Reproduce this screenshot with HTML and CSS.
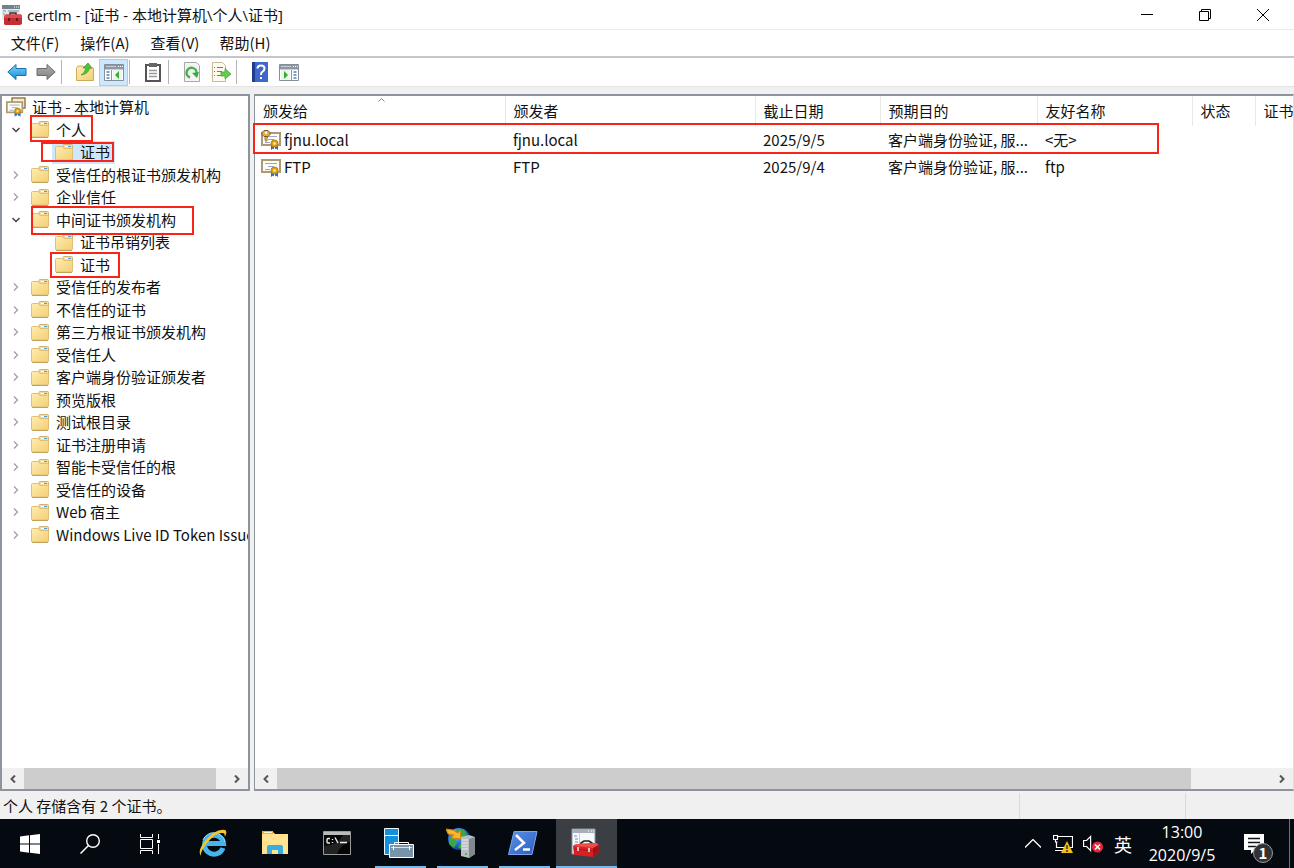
FILE: index.html
```html
<!DOCTYPE html>
<html lang="zh-CN">
<head>
<meta charset="utf-8">
<meta name="viewport" content="width=device-width, initial-scale=1">
<title>certlm - [证书 - 本地计算机\个人\证书]</title>
<link rel="stylesheet" href="styles.css">
</head>
<body>
<svg class="defs" aria-hidden="true">
  <defs>
    <linearGradient id="gold" x1="0" y1="0" x2="1" y2="1"><stop offset="0" stop-color="#ffedb0"/><stop offset="1" stop-color="#f2cf74"/></linearGradient>
    <linearGradient id="blue" x1="0" y1="0" x2="0" y2="1"><stop offset="0" stop-color="#7fd4fa"/><stop offset="1" stop-color="#148ad6"/></linearGradient>
    <linearGradient id="grey" x1="0" y1="0" x2="0" y2="1"><stop offset="0" stop-color="#b0b0b0"/><stop offset="1" stop-color="#808080"/></linearGradient>
    <linearGradient id="psblue" x1="0" y1="0" x2="1" y2="1"><stop offset="0" stop-color="#5d8fe6"/><stop offset="1" stop-color="#2a5fc0"/></linearGradient>
    <radialGradient id="globe" cx=".4" cy=".3" r=".8"><stop offset="0" stop-color="#8fc8ff"/><stop offset=".5" stop-color="#2a6fd8"/><stop offset="1" stop-color="#0b2c86"/></radialGradient>
    <symbol id="folder" viewBox="0 0 18 17">
      <path d="M8 4V1.500q0-1 1-1h7.500q1 0 1 1V6z" fill="#f3dda0" stroke="#d2b26c"/>
      <path d="M10 2.500h6" stroke="#fff"/><path d="M13 2.500h3" stroke="#4c9ae0"/>
      <path d="M.5 3.500q0-1 1-1h6l1.500 2H16.500q1 0 1 1V15q0 1-1 1h-15q-1 0-1-1z" fill="url(#gold)" stroke="#dfbf78"/>
      <path d="M1 16.500h16" stroke="#c5a25a"/>
    </symbol>
    <symbol id="cert" viewBox="0 0 21 19">
      <rect x="1" y="2" width="18" height="12" fill="#fdfcf7" stroke="#ab9a74" stroke-width="2"/>
      <path d="M4 5.500h12M7 8.500h6M4 11.500h5" stroke="#9ba3d8"/>
      <path d="M10 14v5l2-1.500 1 1V14zM14 14v4.500l1-1 2 1.500v-5z" fill="#2468d8"/>
      <circle cx="13.500" cy="12.500" r="3.500" fill="#dca314" stroke="#b98208"/><circle cx="13.500" cy="12.500" r="1.300" fill="#fff0a0"/>
    </symbol>
    <symbol id="key" viewBox="0 0 10 12">
      <path d="M4 6v4l1 1.500L6.500 10 5.500 9l1-1V5z" fill="#e2b54b" stroke="#94691c" stroke-width=".8"/>
      <path d="M1 2.500 3 .5h4l2 2v2l-2 2H3l-2-2z" fill="#dfb04b" stroke="#82591b"/><circle cx="5" cy="2.700" r="1.200" fill="#fff"/>
    </symbol>
    <symbol id="toolbox" viewBox="0 0 28 30">
      <path d="M1 1h23v25H1z" fill="#f7f8fa" stroke="#8c9299"/>
      <path d="M1 1h23v4H1z" fill="#a8afb8"/><path d="M17 3h1M20 3h1M22 3h1" stroke="#fff"/>
      <path d="M3 8h3M4 11h3M4 14h3M3 17h2" stroke="#6b8fbd"/><path d="M8.500 5v14" stroke="#ccc"/>
      <path d="M10 17v-2l3-2h5l3 2v2" fill="none" stroke="#222" stroke-width="1.600"/>
      <path d="m2 18 4-2 20-1 1.500 2v8L22 29 3 27z" fill="#d72125"/><path d="m2 18 4-2 20-1 1.500 2-5 3z" fill="#f04c48"/>
      <path d="m22 20 5.500-3v8L22 29z" fill="#a51217"/><path d="M3 21l19 2 5-2" fill="none" stroke="#861015" stroke-width=".6"/>
      <path d="M7 19v4M18 20v4" stroke="#eee" stroke-width="1.500"/>
    </symbol>
    <symbol id="window" viewBox="0 0 20 17">
      <path d="M.5.500h19v16H.5z" fill="#fff" stroke="#858e99"/><path d="M1 1h18v4H1z" fill="#8d98a6"/>
      <path d="M2 2.500h10" stroke="#c6cdd6"/><path d="M14 2.500h1M16 2.500h1M18 2.500h1" stroke="#fff"/><path d="M1 5.500h18" stroke="#c8ced6"/>
    </symbol>
    <symbol id="left" viewBox="0 0 8 8"><path d="M6 .5 2.500 4 6 7.500" fill="none" stroke="currentColor" stroke-width="2"/></symbol>
    <symbol id="right" viewBox="0 0 8 8"><path d="M2 .5 5.500 4 2 7.500" fill="none" stroke="currentColor" stroke-width="2"/></symbol>
    <symbol id="closed" viewBox="0 0 8 8"><path d="m2 .5 3.500 3.500L2 7.500" fill="none" stroke="#a0a0a0" stroke-width="1.300"/></symbol>
    <symbol id="open" viewBox="0 0 8 8"><path d="m.5 2 3.500 3.500L7.500 2" fill="none" stroke="#404040" stroke-width="1.500"/></symbol>
  </defs>
</svg>
<div class="desktop">
  <header class="titlebar">
    <svg class="app-icon" viewBox="0 0 20 20"><path d="M0 0h18v15H0z" fill="#e3e8ec"/><path d="M0 0h18v4H0z" fill="#75818c"/><path d="M12 2h1M14 2h1M16 2h1" stroke="#fff"/><path d="M1 6h3M1 9h2M6 6h11" stroke="#7890a8"/><path d="M8 10V8h6v2" fill="none" stroke="#303030" stroke-width="1.500"/><path d="m2 11 2-1.500h15l1 1.500v8l-2 1H3l-1-1z" fill="#c32f34"/><path d="m2 11 2-1.500h15l1 1.500v2H2z" fill="#dc4a4c"/><path d="M7 13v3M15 13v3" stroke="#6e1518" stroke-width="2"/></svg>
    <h1 class="title">certlm - [证书 - 本地计算机\个人\证书]</h1>
    <div class="window-controls">
      <button aria-label="最小化"><svg viewBox="0 0 12 12"><path d="M0 5.500h12"/></svg></button>
      <button aria-label="还原"><svg viewBox="0 0 12 12"><path d="M.5 2.500h9v9h-9zM2.500 2V.5h9v9H10"/></svg></button>
      <button aria-label="关闭"><svg viewBox="0 0 12 12"><path d="m0 0 12 12M12 0 0 12"/></svg></button>
    </div>
  </header>
  <nav class="menubar">
    <button>文件(F)</button><button>操作(A)</button><button>查看(V)</button><button>帮助(H)</button>
  </nav>
  <div class="toolbar" role="toolbar" aria-label="工具栏">
    <button aria-label="后退"><svg viewBox="0 0 20 20"><path d="M.8 10 9 2.500v4h10v7H9v4z" fill="url(#blue)" stroke="#1971ae"/></svg></button>
    <button aria-label="前进"><svg viewBox="0 0 20 20"><path d="M19.200 10 11 2.500v4H1v7h10v4z" fill="url(#grey)" stroke="#6c6c6c"/></svg></button>
    <i class="sep"></i>
    <button aria-label="上一级"><svg viewBox="0 0 20 20"><path d="M1.500 5.500 3 4h5l2 2h8.500v12.500h-17z" fill="url(#gold)" stroke="#d0aa5a"/><path d="M6 13q4-2 5-7H8l5-5 4 5h-2.500q-1 6-8.500 7" fill="#56c03e" stroke="#349a25" stroke-width=".7"/></svg></button>
    <button class="pressed" aria-label="显示控制台树"><svg viewBox="0 0 20 20"><use href="#window" y="2" width="20" height="17"/><path d="M2.500 10h3M2.500 13h3M2.500 16h3" stroke="#4f83bf" stroke-width="1.500"/><path d="M7.500 8v10" stroke="#8d98a6"/><path d="M9 8h9v10H9z" fill="#eef6ec"/><path d="M15 9v8l-4-4z" fill="#36ae35"/></svg></button>
    <i class="sep"></i>
    <button aria-label="粘贴"><svg viewBox="0 0 20 20"><path d="M3 3h14v16H3z" fill="#fff" stroke="#555" stroke-width="2"/><path d="M6 1h8v4H6z" fill="#666"/><path d="M6 8.500h8M6 11.500h8M6 14.500h8" stroke="#999" stroke-width="1.500"/></svg></button>
    <i class="sep"></i>
    <button aria-label="刷新"><svg viewBox="0 0 20 20"><path d="M2.500.500h12l3 3v16h-15z" fill="#f4f4f4" stroke="#a8a8a8"/><path d="M8 15.500a5 5 0 1 1 6.500-4" fill="none" stroke="#45b54b" stroke-width="2.500"/><path d="m10 11 7-1-2 6z" fill="#34ad3d"/></svg></button>
    <button aria-label="导出列表"><svg viewBox="0 0 20 20"><path d="M1.500.500h10l3 3v16h-13z" fill="#fffced" stroke="#c5bb9b"/><path d="M3 5.500h1M3 9.500h1M3 13.500h1M6 5.500h6M6 9.500h5M6 13.500h5" stroke="#777"/><path d="M10 10h4V6.500l6 5.500-6 5v-3h-4z" fill="#63ce4b" stroke="#39a22e" stroke-width=".7"/></svg></button>
    <i class="sep"></i>
    <button aria-label="帮助"><svg viewBox="0 0 20 20"><path d="M2 0h16v20H2z" fill="#3f66cb"/><path d="M2 0h3v20H2z" fill="#203c8f"/><path d="M7.500 6.500q0-3 3.500-3t3.500 3q0 2-2 3.200Q11 10.500 11 13" fill="none" stroke="#fff" stroke-width="2"/><path d="M10 15h2v2h-2z" fill="#fff"/></svg></button>
    <button aria-label="显示操作窗格"><svg viewBox="0 0 20 20"><use href="#window" y="2" width="20" height="17"/><path d="M2 8h9v10H2z" fill="#eef6ec"/><path d="M5 9v8l4-4z" fill="#36ae35"/><path d="M12.500 8v10" stroke="#8d98a6"/><path d="M14.500 10h3M14.500 13h3M14.500 16h3" stroke="#4f83bf" stroke-width="1.500"/></svg></button>
  </div>
  <main class="panes">
    <section class="pane tree-pane" aria-label="控制台树">
      <ul class="tree" role="tree">
        <li class="root" role="treeitem"><svg class="root-icon" viewBox="0 0 20 20"><path d="M6 1h13v10H6z" fill="#f5edcf" stroke="#9b7b43" stroke-width="1.500"/><use href="#cert" y="3" width="18" height="17"/></svg><span>证书 - 本地计算机</span></li>
        <li role="treeitem"><button aria-label="折叠"><svg><use href="#open"/></svg></button><svg class="folder"><use href="#folder"/></svg><span>个人</span><i class="mark mark-personal"></i></li>
        <li class="child selected" role="treeitem" aria-selected="true"><svg class="folder"><use href="#folder"/></svg><span>证书</span><i class="mark mark-selected"></i></li>
        <li role="treeitem"><button aria-label="展开"><svg><use href="#closed"/></svg></button><svg class="folder"><use href="#folder"/></svg><span>受信任的根证书颁发机构</span></li>
        <li role="treeitem"><button aria-label="展开"><svg><use href="#closed"/></svg></button><svg class="folder"><use href="#folder"/></svg><span>企业信任</span></li>
        <li role="treeitem"><button aria-label="折叠"><svg><use href="#open"/></svg></button><svg class="folder"><use href="#folder"/></svg><span>中间证书颁发机构</span><i class="mark mark-authority"></i></li>
        <li class="child" role="treeitem"><svg class="folder"><use href="#folder"/></svg><span>证书吊销列表</span></li>
        <li class="child" role="treeitem"><svg class="folder"><use href="#folder"/></svg><span>证书</span><i class="mark mark-child"></i></li>
        <li role="treeitem"><button aria-label="展开"><svg><use href="#closed"/></svg></button><svg class="folder"><use href="#folder"/></svg><span>受信任的发布者</span></li>
        <li role="treeitem"><button aria-label="展开"><svg><use href="#closed"/></svg></button><svg class="folder"><use href="#folder"/></svg><span>不信任的证书</span></li>
        <li role="treeitem"><button aria-label="展开"><svg><use href="#closed"/></svg></button><svg class="folder"><use href="#folder"/></svg><span>第三方根证书颁发机构</span></li>
        <li role="treeitem"><button aria-label="展开"><svg><use href="#closed"/></svg></button><svg class="folder"><use href="#folder"/></svg><span>受信任人</span></li>
        <li role="treeitem"><button aria-label="展开"><svg><use href="#closed"/></svg></button><svg class="folder"><use href="#folder"/></svg><span>客户端身份验证颁发者</span></li>
        <li role="treeitem"><button aria-label="展开"><svg><use href="#closed"/></svg></button><svg class="folder"><use href="#folder"/></svg><span>预览版根</span></li>
        <li role="treeitem"><button aria-label="展开"><svg><use href="#closed"/></svg></button><svg class="folder"><use href="#folder"/></svg><span>测试根目录</span></li>
        <li role="treeitem"><button aria-label="展开"><svg><use href="#closed"/></svg></button><svg class="folder"><use href="#folder"/></svg><span>证书注册申请</span></li>
        <li role="treeitem"><button aria-label="展开"><svg><use href="#closed"/></svg></button><svg class="folder"><use href="#folder"/></svg><span>智能卡受信任的根</span></li>
        <li role="treeitem"><button aria-label="展开"><svg><use href="#closed"/></svg></button><svg class="folder"><use href="#folder"/></svg><span>受信任的设备</span></li>
        <li role="treeitem"><button aria-label="展开"><svg><use href="#closed"/></svg></button><svg class="folder"><use href="#folder"/></svg><span>Web 宿主</span></li>
        <li role="treeitem"><button aria-label="展开"><svg><use href="#closed"/></svg></button><svg class="folder"><use href="#folder"/></svg><span>Windows Live ID Token Issue</span></li>
      </ul>
      <div class="scrollbar"><button aria-label="向左滚动"><svg><use href="#left"/></svg></button><div class="track"><div class="thumb thumb-tree"></div></div><button aria-label="向右滚动"><svg><use href="#right"/></svg></button></div>
    </section>
    <section class="pane list-pane" aria-label="证书列表">
      <div class="list">
        <svg class="sort" viewBox="0 0 7 4"><path d="M.5 3.500l3-3 3 3" fill="none" stroke="#888"/></svg>
        <table>
          <colgroup><col class="c-name"><col class="c-name"><col class="c-date"><col class="c-use"><col class="c-friendly"><col class="c-state"><col class="c-last"></colgroup>
          <thead><tr><th>颁发给</th><th>颁发者</th><th>截止日期</th><th>预期目的</th><th>友好名称</th><th>状态</th><th>证书</th></tr></thead>
          <tbody>
            <tr><td class="subject"><div><svg class="cert" viewBox="0 0 21 20"><use href="#cert" y="1" width="21" height="19"/><use href="#key" width="10" height="12"/></svg>fjnu.local</div></td><td>fjnu.local</td><td>2025/9/5</td><td>客户端身份验证, 服...</td><td>&lt;无&gt;</td><td></td><td></td></tr>
            <tr><td class="subject"><div><svg class="cert" viewBox="0 0 21 20"><use href="#cert" y="1" width="21" height="19"/></svg>FTP</div></td><td>FTP</td><td>2025/9/4</td><td>客户端身份验证, 服...</td><td>ftp</td><td></td><td></td></tr>
          </tbody>
        </table>
      </div>
      <i class="mark mark-row"></i>
      <div class="scrollbar"><button aria-label="向左滚动"><svg><use href="#left"/></svg></button><div class="track"><div class="thumb thumb-list"></div></div><button aria-label="向右滚动"><svg><use href="#right"/></svg></button></div>
    </section>
  </main>
  <footer class="status"><span>个人 存储含有 2 个证书。</span><i class="status-a"></i><i class="status-b"></i></footer>
  <div class="taskbar">
    <div class="system">
      <button aria-label="开始"><svg width="20" height="20" viewBox="0 0 20 20"><path d="m0 2.500 9-1.200V9.500H0zm10-1.300L20 0v9.500H10zM0 10.500h9v8.200L0 17.500zm10 0h10V20l-10-1.200z" fill="#fff"/></svg></button>
      <button aria-label="搜索"><svg width="20" height="20" viewBox="0 0 20 20"><circle cx="13" cy="7" r="6.300" fill="none" stroke="#fff" stroke-width="1.400"/><path d="m8.500 11.500-8 8" stroke="#fff" stroke-width="1.500"/></svg></button>
      <button aria-label="任务视图"><svg width="20" height="20" viewBox="0 0 20 20"><path d="M.5 0v3.500h12V0M.5 20v-3.500h12V20M.5 5.500h12v9H.5zM18.500 0v5M18.500 10v10" fill="none" stroke="#fff"/><path d="M17 6h3v3h-3z" fill="#fff"/></svg></button>
    </div>
    <div class="apps">
      <button aria-label="Internet Explorer"><svg width="30" height="30" viewBox="0 0 30 30"><path d="M25 20A9.500 9.500 0 1 1 25.500 15.500H9" fill="none" stroke="#45b6ec" stroke-width="5"/><path d="M27 14A11.500 11.500 0 0 0 5 12" fill="none" stroke="#9be2ff"/><path d="M3 28Q-1 23 7 13 18 0 27 2q3 2-.5 7 1-4-2-4Q18 4 9 15q-7 9-6 13z" fill="#f4c52c"/></svg></button>
      <button aria-label="文件资源管理器"><svg width="28" height="24" viewBox="0 0 28 24"><path d="M1 1h11l2 2h13v20H1z" fill="#ffe390"/><path d="M1 0h11v3H1z" fill="#efb633"/><path d="M3 1.500h8" stroke="#fff4c4"/><path d="M6 23v-7q0-2 2-2h12q2 0 2 2v7h-5v-4h-6v4z" fill="#35afe3"/></svg></button>
      <button aria-label="命令提示符"><svg width="28" height="24" viewBox="0 0 28 24"><path d="M.5.500h27v23H.5z" fill="#050505" stroke="#9a9a9a"/><path d="M1 1h26v3H1z" fill="#bbb"/><path d="M1 23V15Q15 14 20 4h7v7Q18 13 14 23z" fill="#222"/><path d="M7 7.500H5q-1 0-1 1.500v2q0 1 1 1h2M9.500 8v1M9.500 11v1M12 6.500l3 5.500M17 11.500h7" fill="none" stroke="#eee" stroke-width="1.400"/></svg></button>
      <button class="running" aria-label="服务器管理器"><svg width="30" height="30" viewBox="0 0 30 30"><path d="M.5.500h14v26H.5z" fill="#168fdd" stroke="#eaf8ff"/><path d="M0 7.500h15" stroke="#fff"/><path d="M10.500 17v-2.500h14V17" fill="none" stroke="#fff"/><path d="M5.500 16.500h24v13h-24z" fill="#7894a8" stroke="#fff"/><path d="M7 19.500h21" stroke="#d7e2e8"/><path d="M9.500 18v4M25.500 18v4" stroke="#fff"/></svg></button>
      <button class="running" aria-label="IIS 管理器"><svg width="30" height="30" viewBox="0 0 30 30"><circle cx="13" cy="11" r="11" fill="url(#globe)"/><path d="m11 1 7 1 3 5-5 5-5-2-2-4zm-8 8 5 2 3 4-3 5-5-4zm12 6 4 2-3 5-4-3z" fill="#35a942"/><path d="M0 1 7 2l5 3 2-3 1 9-10-1 3-3-6-1z" fill="#f8b62e" stroke="#cd8210"/><path d="m15 9 8-2 6 2v17l-6 4-8-2z" fill="#b8bdc1"/><path d="m23 11 6-2v17l-6 4z" fill="#81888d"/><path d="M16 12h6M16 15h6M16 18h6M16 21h6" stroke="#eee"/><path d="M19 25h2v2h-2z" fill="#43c33b"/></svg></button>
      <button class="running" aria-label="PowerShell"><svg width="30" height="24" viewBox="0 0 30 24"><path d="M6 .5h23L24 23.500H.5z" fill="url(#psblue)" stroke="#7ba5ee"/><path d="m8 4 8 8-9 7M15 18.500h7" fill="none" stroke="#fff" stroke-width="2.500"/></svg></button>
      <button class="running active" aria-label="证书管理"><svg width="28" height="30"><use href="#toolbox"/></svg></button>
    </div>
    <div class="tray">
      <button aria-label="显示隐藏的图标"><svg width="16" height="9" viewBox="0 0 16 9"><path d="m0 8.500 8-8 8 8" fill="none" stroke="#fff" stroke-width="1.300"/></svg></button>
      <button aria-label="网络"><svg width="20" height="18" viewBox="0 0 20 18"><path d="M5 1.500h14.500v11h-6M3.500 7v5.500h8M.5.500h4v4h-4zM2.500 5v2h2M2 15.500h8" fill="none" stroke="#fff" stroke-width="1.200"/><path d="m14 6 6 12H8z" fill="#f5bd18"/><path d="M14 10v4M14 15v2" stroke="#222" stroke-width="1.300"/></svg></button>
      <button aria-label="音量"><svg width="20" height="18" viewBox="0 0 20 18"><path d="M.6 5.500h3l4-4v14l-4-4h-3z" fill="none" stroke="#fff" stroke-width="1.200"/><circle cx="14.500" cy="12" r="5.500" fill="#e42838"/><path d="m12 9.500 5 5m0-5-5 5" stroke="#fff" stroke-width="1.500"/></svg></button>
      <button class="ime">英</button>
      <button class="clock"><time>13:00</time><time>2020/9/5</time></button>
      <button class="notice" aria-label="操作中心，1 条通知"><svg width="20" height="20" viewBox="0 0 20 20"><path d="M0 0h20v16h-9l-4 4v-4H0z" fill="#fff"/><path d="M4 4.500h12M4 8.500h12M4 12.500h8" stroke="#101318" stroke-width="1.300"/></svg><span>1</span></button>
      <button class="show-desktop" aria-label="显示桌面"></button>
    </div>
  </div>
</div>
</body>
</html>
```

FILE: styles.css
```css
* { box-sizing: border-box; }
body { margin: 0; background: #f0f0f0; color: #111; font: 15px/20px "Noto Sans CJK SC", "Open Sans", sans-serif; }
button { display: flex; align-items: center; justify-content: center; margin: 0; padding: 0; border: 0; background: transparent; color: inherit; font: inherit; }
svg { display: block; flex: none; }
.defs { position: absolute; width: 0; height: 0; }
.desktop { display: flex; flex-direction: column; height: 100vh; overflow: hidden; }
.titlebar { display: flex; align-items: center; flex: none; height: 30px; padding-left: 2px; background: #fff; border-bottom: 1px solid #ebebeb; }
.app-icon { width: 20px; height: 20px; }
.title { flex: 1; margin: 0 0 0 5px; font: 400 15px/20px "Open Sans", "Noto Sans CJK SC", sans-serif; white-space: nowrap; }
.window-controls { display: flex; height: 100%; padding-right: 2px; }
.window-controls button { width: 58px; }
.window-controls svg { width: 12px; height: 12px; fill: none; stroke: #000; }
.menubar { display: flex; flex: none; height: 28px; background: #fff; border-bottom: 2px solid #c4c6c9; }
.menubar button { width: 70px; }
.toolbar { display: flex; align-items: center; flex: none; height: 29px; padding-left: 2px; background: #fff; border-bottom: 1px solid #e3e3e3; }
.toolbar button { width: 29px; height: 27px; }
.toolbar svg { width: 20px; height: 20px; }
.toolbar .pressed { background: #cce8ff; border: 1px solid #99d1ff; }
.sep { width: 1px; height: 24px; margin: 0 8px 0 1px; background: #b4b4b4; }
.panes { display: flex; flex: 1; gap: 4px; min-height: 0; padding-top: 7px; }
.pane { display: flex; flex-direction: column; position: relative; border: 2px solid #8e949c; background: #fff; min-width: 0; }
.tree-pane { flex: none; width: 250px; }
.list-pane { flex: 1; border-right: 1px solid #ddd; border-left-width: 1px; }
.tree { display: grid; grid-template-rows: repeat(20, 1fr); height: 450px; margin: 0; padding: 0; list-style: none; overflow: hidden; }
.tree li { position: relative; display: flex; align-items: center; padding-left: 9px; white-space: nowrap; }
.tree button { width: 10px; height: 16px; margin-right: 10px; }
.tree button svg { width: 8px; height: 8px; }
.folder { width: 18px; height: 17px; margin-right: 7px; }
.tree .root { padding-left: 4px; }
.root-icon { width: 20px; height: 20px; margin-right: 6px; }
.tree .child { padding-left: 53px; }
.tree .selected { background: linear-gradient(#cce8ff, #cce8ff) 50px 0 / 63px 100% no-repeat; }
.mark { position: absolute; z-index: 2; border: 2px solid #f82418; pointer-events: none; }
.mark-personal { left: 28px; top: -4px; width: 63px; height: 27px; }
.mark-selected { left: 39px; top: 1px; width: 73px; height: 20px; }
.mark-authority { left: 29px; top: -3px; width: 163px; height: 29px; }
.mark-child { left: 48px; top: -2px; width: 70px; height: 26px; }
.mark-row { left: -2px; top: 27px; width: 906px; height: 31px; }
.list { position: relative; flex: 1; overflow: hidden; }
.sort { position: absolute; left: 123px; top: 2px; width: 7px; height: 4px; }
table { width: 100%; border-collapse: collapse; table-layout: fixed; }
.c-name { width: 250px; }
.c-date { width: 125px; }
.c-use { width: 157px; }
.c-friendly { width: 155px; }
.c-state { width: 63px; }
th, td { height: 27px; padding: 0 0 0 8px; text-align: left; font-weight: 400; white-space: nowrap; }
th { height: 30px; border-right: 1px solid #e8e8e8; }
th:last-child { border-right: 0; }
.subject { padding-left: 6px; }
.subject div { display: flex; align-items: center; gap: 2px; }
.cert { width: 21px; height: 20px; }
.scrollbar { display: flex; height: 21px; margin-top: auto; background: #f0f0f0; color: #555; }
.scrollbar button { width: 22px; }
.scrollbar button svg { width: 8px; height: 8px; }
.track { flex: 1; }
.thumb { height: 100%; background: #cdcdcd; }
.thumb-tree { width: 95%; }
.thumb-list { width: 92%; }
.status { display: flex; align-items: center; flex: none; height: 28px; padding: 2px 0 0 3px; background: #f0f0f0; }
.status span { flex: 1; }
.status i { align-self: stretch; border-left: 1px solid #dadada; }
.status-a { width: 166px; }
.status-b { width: 109px; }
.taskbar { display: flex; flex: none; height: 49px; background: #050a11; color: #fff; }
.system { display: flex; margin-right: 4px; }
.system button { width: 60px; }
.apps { display: flex; gap: 1px; }
.apps button { width: 61px; padding-right: 3px; border-bottom: 2px solid transparent; }
.apps .running { background: linear-gradient(#76b9ed, #76b9ed) center bottom / 51px 2px no-repeat border-box; }
.apps .active { background: #3b3e42; border-bottom-color: #76b9ed; }
.tray { display: flex; margin-left: auto; }
.tray button { width: 30px; }
.tray .ime { font-size: 18px; }
.tray .clock { flex-direction: column; width: 88px; font: 16px/23px "Open Sans", sans-serif; }
.tray .notice { position: relative; width: 63px; padding-right: 8px; }
.notice span { position: absolute; left: 27px; top: 24px; width: 20px; height: 20px; border: 1px solid #999; border-radius: 50%; background: #303236; font-size: 15px; font-weight: 700; line-height: 18px; }
.tray .show-desktop { width: 5px; border-left: 1px solid #70757b; }
```
